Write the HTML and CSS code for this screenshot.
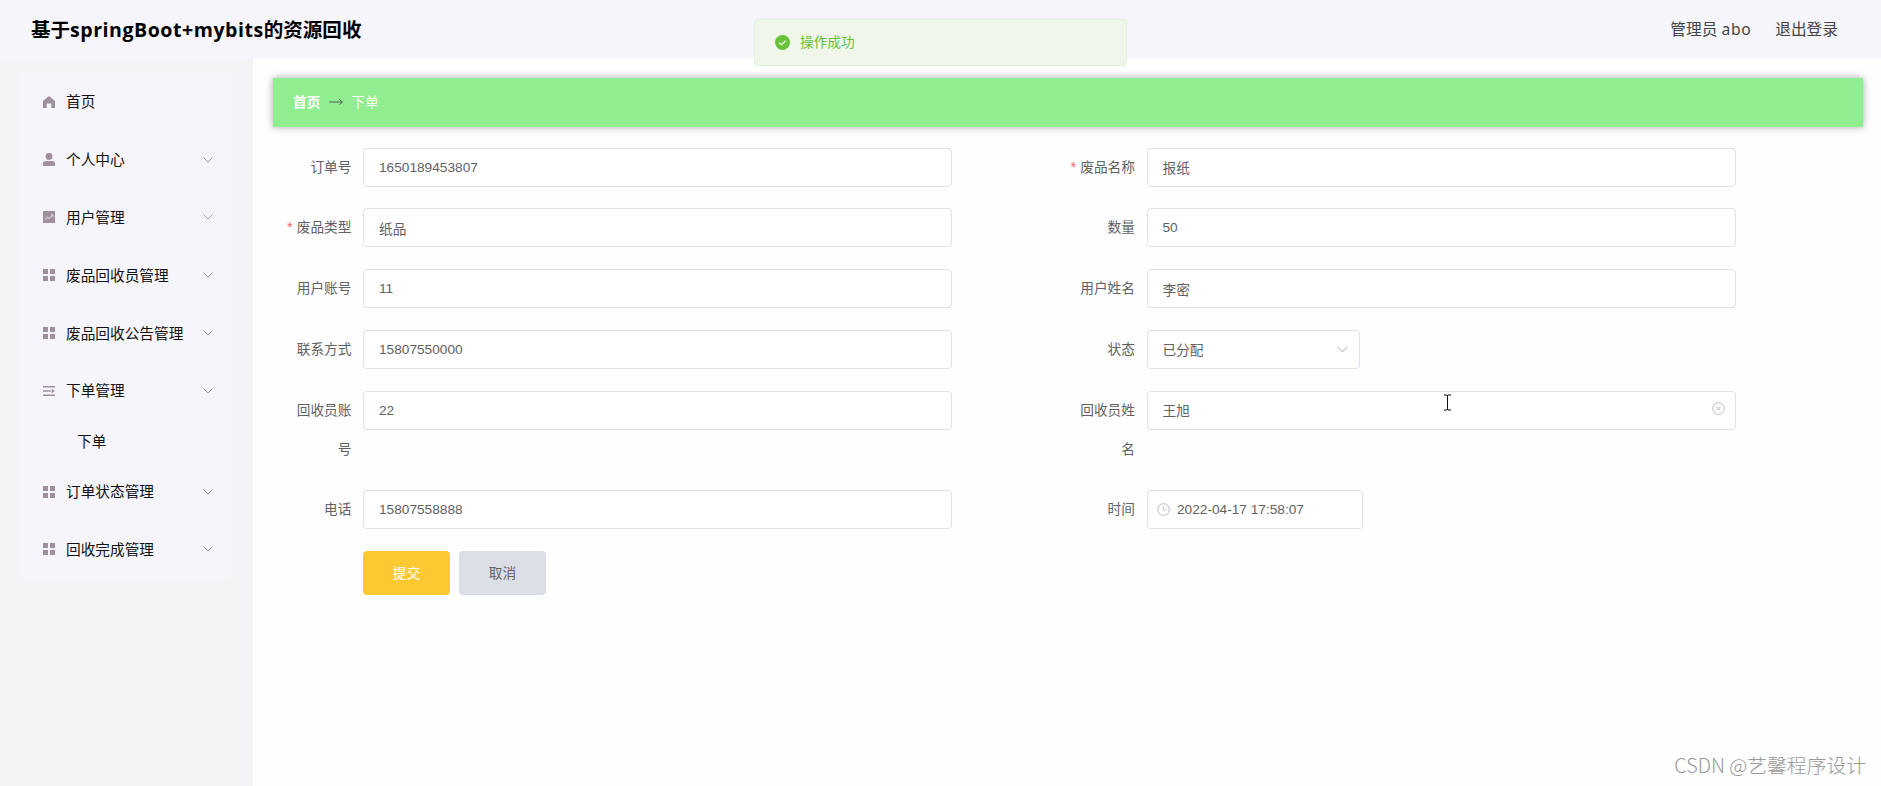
FILE: index.html
```html
<!DOCTYPE html>
<html lang="zh-CN">
<head>
<meta charset="utf-8">
<title>基于springBoot+mybits的资源回收</title>
<link rel="stylesheet" href="styles.css">
</head>
<body>
<svg class="sprite" aria-hidden="true">
  <symbol id="grid" viewBox="0 0 12 12"><path d="M0 0h5v5H0zM7 0h5v5H7zM0 7h5v5H0zM7 7h5v5H7z"/></symbol>
  <symbol id="down" viewBox="0 0 10 6"><path d="M.6.6 5 5 9.4.6" fill="none" stroke="currentColor"/></symbol>
</svg>
<header class="header">
  <h1 class="title">基于<span class="title-latin">springBoot+mybits</span>的资源回收</h1>
  <nav class="user"><span>管理员 <span class="name">abo</span></span><span>退出登录</span></nav>
</header>
<div class="body">
  <aside class="sidebar">
    <ul class="menu">
      <li class="item"><svg class="icon" viewBox="0 0 12 12"><path d="M6 0 12 5v7H8.2V7.5H3.8V12H0V5z"/></svg><span>首页</span></li>
      <li class="item"><svg class="icon person" viewBox="0 0 12 13"><circle cx="6" cy="3.4" r="3.4"/><path d="M0 13v-2a3 3 0 0 1 3-3h6a3 3 0 0 1 3 3v2z"/></svg><span>个人中心</span><svg class="chevron"><use href="#down"/></svg></li>
      <li class="item"><svg class="icon" viewBox="0 0 12 12"><path d="M0 0h12v12H0z"/><path d="M2 8.6 4.4 6.3 6 7.6l3.6-3.5M8 3.9h2v1.8" fill="none" stroke="#f5f5fb" stroke-width=".9"/></svg><span>用户管理</span><svg class="chevron"><use href="#down"/></svg></li>
      <li class="item"><svg class="icon"><use href="#grid"/></svg><span>废品回收员管理</span><svg class="chevron"><use href="#down"/></svg></li>
      <li class="item"><svg class="icon"><use href="#grid"/></svg><span>废品回收公告管理</span><svg class="chevron"><use href="#down"/></svg></li>
      <li class="item"><svg class="icon" viewBox="0 0 12 12"><path d="M0 1h12v1.5H0zM0 5.2h7.8v1.5H0zM0 9.5h12V11H0zM8.7 3.8 12 6 8.7 8.2z"/></svg><span>下单管理</span><svg class="chevron"><use href="#down"/></svg></li>
      <li class="subitem">下单</li>
      <li class="item"><svg class="icon"><use href="#grid"/></svg><span>订单状态管理</span><svg class="chevron"><use href="#down"/></svg></li>
      <li class="item"><svg class="icon"><use href="#grid"/></svg><span>回收完成管理</span><svg class="chevron"><use href="#down"/></svg></li>
    </ul>
  </aside>
  <main class="main">
    <div class="breadcrumb">
      <b>首页</b>
      <svg class="arrow" viewBox="0 0 14 8"><path d="M0 4h13.4M10.3 1.4 13.4 4l-3.1 2.6" stroke="#555e59" fill="none"/></svg>
      <span>下单</span>
    </div>
    <form class="form">
      <div class="field"><label class="label">订单号</label><div class="input">1650189453807</div></div>
      <div class="field"><label class="label required">废品名称</label><div class="input">报纸</div></div>
      <div class="field"><label class="label required">废品类型</label><div class="input">纸品</div></div>
      <div class="field"><label class="label">数量</label><div class="input">50</div></div>
      <div class="field"><label class="label">用户账号</label><div class="input">11</div></div>
      <div class="field"><label class="label">用户姓名</label><div class="input">李密</div></div>
      <div class="field"><label class="label">联系方式</label><div class="input">15807550000</div></div>
      <div class="field"><label class="label">状态</label><div class="input select">已分配<svg class="caret"><use href="#down"/></svg></div></div>
      <div class="field"><label class="label">回收员账号</label><div class="input">22</div></div>
      <div class="field"><label class="label">回收员姓名</label><div class="input">王旭<svg class="clear" viewBox="0 0 13 13"><circle cx="6.5" cy="6.5" r="5.8"/><path d="m4.7 4.7 3.6 3.6m0-3.6L4.7 8.3"/></svg></div></div>
      <div class="field"><label class="label">电话</label><div class="input">15807558888</div></div>
      <div class="field"><label class="label">时间</label><div class="input date"><svg class="clock" viewBox="0 0 13 13"><circle cx="6.5" cy="6.5" r="5.8"/><path d="M6.3 3v3.8h3.2"/></svg>2022-04-17 17:58:07</div></div>
      <div class="actions"><button class="btn submit" type="button">提交</button><button class="btn cancel" type="button">取消</button></div>
    </form>
  </main>
</div>
<div class="message"><svg class="ok" viewBox="0 0 14 14"><circle cx="7" cy="7" r="7" fill="#67c23a"/><path d="m3.9 7.1 2.2 2.1 4-3.9" fill="none" stroke="#e4f4dc" stroke-width="1.3"/></svg><span>操作成功</span></div>
<svg class="cursor" viewBox="0 0 7 17"><path d="M0 1h3m1 0h3M0 16h3m1 0h3" stroke="#555" stroke-width="1.3"/><path d="M3.5 1v15" stroke="#111"/></svg>
<div class="watermark">CSDN @艺馨程序设计</div>
</body>
</html>
```
FILE: styles.css
```css
* { box-sizing: border-box; }
body {
  margin: 0;
  height: 786px;
  overflow: hidden;
  display: flex;
  flex-direction: column;
  background: #fefefe;
  color: #606266;
  font: 13.68px "Liberation Sans", "Noto Sans CJK SC", sans-serif;
}
.sprite { position: absolute; width: 0; height: 0; }
.header {
  flex: none;
  height: 58px;
  padding: 0 43px 0 31px;
  display: flex;
  align-items: center;
  justify-content: space-between;
  background: #f5f5fb;
}
.title {
  margin: 0;
  color: #000;
  font: bold 19.54px/58px "Noto Sans CJK SC", sans-serif;
  white-space: nowrap;
}
.title-latin { font-family: "Open Sans", "Noto Sans", sans-serif; letter-spacing: .54px; }
.user {
  display: flex;
  gap: 24px;
  color: #444;
  font: 15.7px/58px "Noto Sans", "Noto Sans CJK SC", sans-serif;
}
.name { letter-spacing: .6px; }
.body { flex: 1; display: flex; min-height: 0; }
.sidebar { flex: none; width: 253px; padding: 15px 22px 0 19px; background: #f4f4f6; }
.menu {
  margin: 0;
  padding: 0;
  list-style: none;
  background: #f5f5fb;
  color: #111;
  font: 14.68px "Noto Sans CJK SC", sans-serif;
}
.item { height: 57.8px; padding: 0 18px 0 24px; display: flex; align-items: center; }
.item span { padding-bottom: 2px; }
.icon { flex: none; width: 12px; height: 12px; margin-right: 11px; fill: #a08f9d; }
.person { height: 13px; }
.chevron { width: 10px; height: 6px; margin-left: auto; color: #909399; }
.subitem { height: 43px; padding-left: 58px; line-height: 41px; }
.main { flex: 1; padding: 19.5px 18px 0 20px; }
.breadcrumb {
  height: 49px;
  padding: 0 0 1px 20px;
  display: flex;
  align-items: center;
  background: #90ee90;
  color: #fff;
  box-shadow: 0 0 7px rgba(40, 30, 45, .4);
}
.breadcrumb b, .breadcrumb span { padding-bottom: 2px; }
.arrow { width: 14px; height: 8px; margin: 0 8.5px; }
.form {
  padding: 21px 0 0 12px;
  display: grid;
  grid-template-columns: 783.5px 783.5px;
  row-gap: 21.8px;
}
.field { display: flex; align-items: flex-start; }
.label { flex: none; width: 78px; padding-right: 11.6px; text-align: right; line-height: 39px; }
.required::before { content: "*"; margin-right: 4px; color: #f56c6c; font-size: 15px; line-height: 0; }
.input {
  width: 589px;
  height: 39px;
  padding: 0 10px 0 15px;
  display: flex;
  align-items: center;
  border: 1px solid #dfe0e8;
  border-radius: 4px;
  background: #fff;
}
.select { width: 213px; padding-right: 11px; }
.caret { width: 11px; height: 7px; margin-left: auto; color: #c0c4cc; }
.date { width: 216px; padding-left: 9.5px; }
.clock, .clear { width: 13px; height: 13px; fill: none; stroke: #cdced8; stroke-width: 1.3; }
.clock { margin-right: 7px; }
.clear { margin: 0 0 3px auto; }
.actions { grid-column: 1 / -1; display: flex; gap: 9px; padding-left: 78px; }
.btn {
  width: 87px;
  height: 43.5px;
  padding: 0 0 2px;
  border: 0;
  border-radius: 4px;
  font: inherit;
}
.submit { background: #fdc933; color: #fff; }
.cancel { background: #dcdee6; color: #606266; }
.message {
  position: absolute;
  left: 754px;
  top: 18.5px;
  width: 373px;
  height: 47px;
  padding-left: 20px;
  display: flex;
  align-items: center;
  gap: 10px;
  border: 1px solid #e1f3d8;
  border-radius: 4px;
  background: #f0f6ea;
  color: #67c23a;
}
.message span { padding-bottom: 2px; }
.ok { width: 15px; height: 15px; }
.cursor { position: absolute; left: 1444px; top: 394px; width: 7px; height: 17px; }
.watermark {
  position: absolute;
  right: 15px;
  bottom: 7px;
  color: #999;
  font: 300 19.8px/28px "Noto Sans CJK SC", sans-serif;
}
```
